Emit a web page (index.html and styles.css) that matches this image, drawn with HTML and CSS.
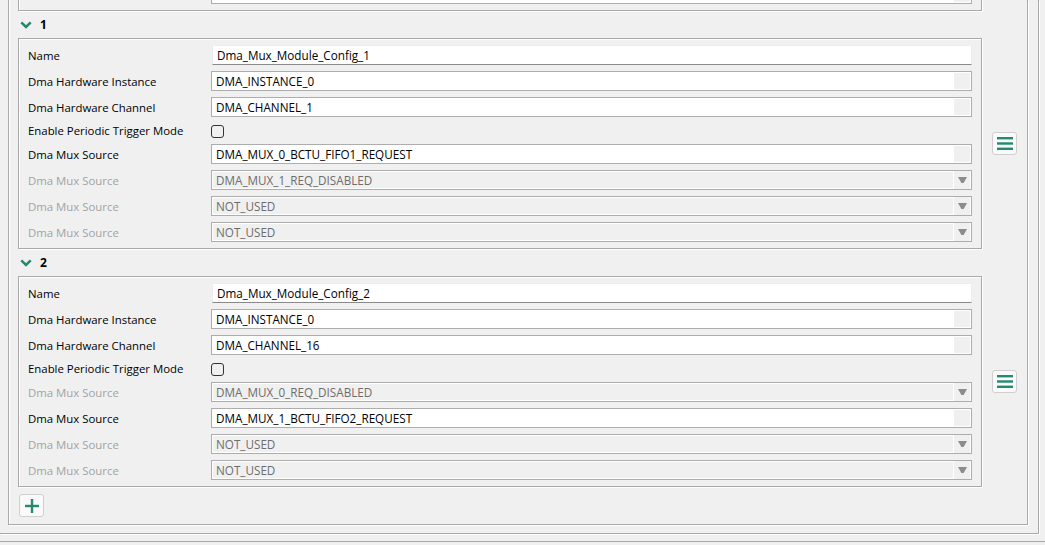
FILE: index.html
```html
<!DOCTYPE html>
<html>
<head>
<meta charset="utf-8">
<link rel="stylesheet" href="styles.css">
</head>
<body>
<div class="outer">
  <div class="panel">
    <div class="group-row first">
      <div class="groupbox">
        <div class="row"><span class="label"></span><div class="combo"><span class="value"></span><span class="btn"></span></div></div>
      </div>
    </div>

    <div class="header"><svg class="chev" width="12" height="8" viewBox="0 0 12 8"><path d="M1.3 1.3 L6 6 L10.7 1.3" fill="none" stroke="#23896f" stroke-width="2.5"/></svg><span class="num">1</span></div>
    <div class="group-row">
      <div class="groupbox">
        <div class="row"><span class="label">Name</span><div class="text"><span class="value">Dma_Mux_Module_Config_1</span></div></div>
        <div class="row"><span class="label">Dma Hardware Instance</span><div class="combo"><span class="value">DMA_INSTANCE_0</span><span class="btn"></span></div></div>
        <div class="row"><span class="label">Dma Hardware Channel</span><div class="combo"><span class="value">DMA_CHANNEL_1</span><span class="btn"></span></div></div>
        <div class="row check-row"><span class="label">Enable Periodic Trigger Mode</span><span class="checkbox"></span></div>
        <div class="row"><span class="label">Dma Mux Source</span><div class="combo"><span class="value">DMA_MUX_0_BCTU_FIFO1_REQUEST</span><span class="btn"></span></div></div>
        <div class="row"><span class="label dis">Dma Mux Source</span><div class="combo disabled"><span class="value">DMA_MUX_1_REQ_DISABLED</span><span class="btn"><svg width="9" height="6" viewBox="0 0 9 6"><polygon points="0,0 9,0 5.6,6 3.4,6" fill="#8c8c8c"/></svg></span></div></div>
        <div class="row"><span class="label dis">Dma Mux Source</span><div class="combo disabled"><span class="value">NOT_USED</span><span class="btn"><svg width="9" height="6" viewBox="0 0 9 6"><polygon points="0,0 9,0 5.6,6 3.4,6" fill="#8c8c8c"/></svg></span></div></div>
        <div class="row"><span class="label dis">Dma Mux Source</span><div class="combo disabled"><span class="value">NOT_USED</span><span class="btn"><svg width="9" height="6" viewBox="0 0 9 6"><polygon points="0,0 9,0 5.6,6 3.4,6" fill="#8c8c8c"/></svg></span></div></div>
      </div>
      <div class="menu-btn"><svg width="16" height="13" viewBox="0 0 16 13"><rect x="0" y="0" width="16" height="2.4" fill="#23896f"/><rect x="0" y="5.3" width="16" height="2.4" fill="#23896f"/><rect x="0" y="10.6" width="16" height="2.4" fill="#23896f"/></svg></div>
    </div>

    <div class="header"><svg class="chev" width="12" height="8" viewBox="0 0 12 8"><path d="M1.3 1.3 L6 6 L10.7 1.3" fill="none" stroke="#23896f" stroke-width="2.5"/></svg><span class="num">2</span></div>
    <div class="group-row">
      <div class="groupbox">
        <div class="row"><span class="label">Name</span><div class="text"><span class="value">Dma_Mux_Module_Config_2</span></div></div>
        <div class="row"><span class="label">Dma Hardware Instance</span><div class="combo"><span class="value">DMA_INSTANCE_0</span><span class="btn"></span></div></div>
        <div class="row"><span class="label">Dma Hardware Channel</span><div class="combo"><span class="value">DMA_CHANNEL_16</span><span class="btn"></span></div></div>
        <div class="row check-row"><span class="label">Enable Periodic Trigger Mode</span><span class="checkbox"></span></div>
        <div class="row"><span class="label dis">Dma Mux Source</span><div class="combo disabled"><span class="value">DMA_MUX_0_REQ_DISABLED</span><span class="btn"><svg width="9" height="6" viewBox="0 0 9 6"><polygon points="0,0 9,0 5.6,6 3.4,6" fill="#8c8c8c"/></svg></span></div></div>
        <div class="row"><span class="label">Dma Mux Source</span><div class="combo"><span class="value">DMA_MUX_1_BCTU_FIFO2_REQUEST</span><span class="btn"></span></div></div>
        <div class="row"><span class="label dis">Dma Mux Source</span><div class="combo disabled"><span class="value">NOT_USED</span><span class="btn"><svg width="9" height="6" viewBox="0 0 9 6"><polygon points="0,0 9,0 5.6,6 3.4,6" fill="#8c8c8c"/></svg></span></div></div>
        <div class="row"><span class="label dis">Dma Mux Source</span><div class="combo disabled"><span class="value">NOT_USED</span><span class="btn"><svg width="9" height="6" viewBox="0 0 9 6"><polygon points="0,0 9,0 5.6,6 3.4,6" fill="#8c8c8c"/></svg></span></div></div>
      </div>
      <div class="menu-btn"><svg width="16" height="13" viewBox="0 0 16 13"><rect x="0" y="0" width="16" height="2.4" fill="#23896f"/><rect x="0" y="5.3" width="16" height="2.4" fill="#23896f"/><rect x="0" y="10.6" width="16" height="2.4" fill="#23896f"/></svg></div>
    </div>

    <div class="add-btn"><svg width="14" height="14" viewBox="0 0 14 14"><rect x="5.8" y="0" width="2.4" height="14" fill="#23896f"/><rect x="0" y="5.8" width="14" height="2.4" fill="#23896f"/></svg></div>
  </div>
</div>
<div class="status"></div>
</body>
</html>
```
FILE: styles.css
```css
html, body {
  margin: 0;
  padding: 0;
}
body {
  background: #f0f0f0;
  font-family: "Open Sans", "Noto Sans", "Liberation Sans", sans-serif;
  font-size: 11.4px;
  color: #000;
  width: 1045px;
  height: 545px;
  overflow: hidden;
}
.outer {
  width: 1039px;
  height: 534px;
  box-sizing: border-box;
  border-right: 1px solid #a9a9a9;
  border-bottom: 1px solid #a9a9a9;
  box-shadow: 1px 1px 0 #fff;
  padding-left: 8px;
}
.panel {
  width: 1020px;
  height: 525px;
  box-sizing: border-box;
  border-left: 1px solid #a9a9a9;
  border-right: 1px solid #a9a9a9;
  border-bottom: 1px solid #a9a9a9;
  box-shadow: 1px 1px 0 #fff, inset 1px 0 0 #fff;
  padding-left: 9px;
  display: flex;
  flex-direction: column;
}
.group-row {
  display: flex;
  align-items: center;
}
.group-row.first {
  margin-top: -23px;
}
.groupbox {
  width: 964px;
  box-sizing: border-box;
  border: 1px solid #a9a9a9;
  box-shadow: 1px 1px 0 #fff, inset 1px 1px 0 #fff;
  padding: 6px 9px;
  display: flex;
  flex-direction: column;
  gap: 6px;
}
.row {
  display: flex;
  align-items: center;
  height: 20px;
}
.row.check-row {
  height: 15px;
}
.label {
  width: 183px;
  flex: none;
  white-space: nowrap;
}
.label.dis {
  color: #a3a3a3;
}
.text, .combo {
  flex: 1;
  height: 20px;
  box-sizing: border-box;
  display: flex;
  align-items: center;
  font-size: 11.7px;
}
.text {
  background: #fff;
  border: 1px solid #ededed;
  border-bottom-color: #8a8a8a;
  margin-left: 1px;
  padding-left: 4px;
}
.combo {
  background: #fff;
  border: 1px solid #adadad;
}
.combo .value {
  flex: 1;
  padding-left: 4px;
  white-space: nowrap;
}
.combo .btn {
  width: 16px;
  height: 16px;
  margin: 1px;
  background: #f0f0f0;
  display: flex;
  align-items: center;
  justify-content: center;
}
.combo.disabled {
  background: #f0f0f0;
  box-shadow: inset 1px 1px 0 #fff, inset -1px -1px 0 #fff;
}
.combo.disabled .value {
  color: #6d6d6d;
}
.combo.disabled .btn {
  margin: 0 1px 0 0;
  height: 18px;
  width: 17px;
  border-left: 1px solid #fff;
  box-sizing: border-box;
}
.checkbox {
  width: 13px;
  height: 13px;
  box-sizing: border-box;
  border: 1px solid #333;
  border-radius: 3px;
  margin-top: 1px;
}
.header {
  height: 27px;
  display: flex;
  align-items: center;
  padding-left: 2px;
}
.chev {
  margin-right: 8px;
  margin-top: 1px;
}
.num {
  font-weight: bold;
  font-size: 12px;
}
.menu-btn, .add-btn {
  width: 25px;
  height: 23px;
  box-sizing: border-box;
  border: 1px solid #cfcfcf;
  border-radius: 3px;
  background: #fafafa;
  display: flex;
  align-items: center;
  justify-content: center;
}
.menu-btn {
  margin-left: 10px;
}
.add-btn {
  margin-top: 7px;
  margin-left: 1px;
}
.status {
  margin-top: 7px;
  border-top: 1px solid #a9a9a9;
}
```
